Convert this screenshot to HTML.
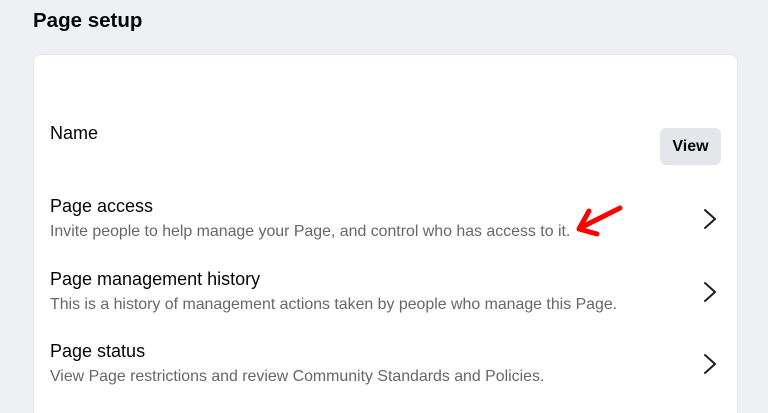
<html style="height:413px;overflow:hidden"><head><style>
body{margin:0;width:768px;height:413px;background:#eef0f3;font-family:"Liberation Sans",sans-serif;overflow:hidden;position:relative}
.t{position:absolute;left:33px;top:9px;font-size:20.5px;font-weight:bold;color:#050505}
.card{position:absolute;left:33px;top:54px;width:705px;height:359px;background:#fff;border-radius:8px 8px 0 0;border:1px solid #e4e6ea;border-bottom:none;box-sizing:border-box}
.a{position:absolute;left:50px;font-size:18px;color:#050505}
.s{position:absolute;left:50px;font-size:15.9px;color:#65676b}
.v{position:absolute;left:660px;top:128px;width:61px;height:37px;background:#e4e6eb;border-radius:6px;font-size:16px;font-weight:bold;text-align:center;line-height:37px;color:#050505}
svg{position:absolute}
</style></head><body>
<div class="t">Page setup</div>
<div class="card"></div>
<div class="a" style="top:123px">Name</div>
<div class="v">View</div>
<div class="a" style="top:196px">Page access</div>
<div class="s" style="top:223px">Invite people to help manage your Page, and control who has access to it.</div>
<div class="a" style="top:269px">Page management history</div>
<div class="s" style="top:296px">This is a history of management actions taken by people who manage this Page.</div>
<div class="a" style="top:341px">Page status</div>
<div class="s" style="top:368px">View Page restrictions and review Community Standards and Policies.</div>
<svg width="768" height="413" style="left:0;top:0">
<g fill="none" stroke="#1c1e21" stroke-width="2" stroke-linecap="round">
<path d="M705 210l10 9-10 9"/><path d="M705 283l10 9-10 9"/><path d="M705 355l10 9-10 9"/>
</g>
<g fill="none" stroke="#f00" stroke-width="5" stroke-linecap="round" stroke-linejoin="round">
<path d="M620 208L580 228"/><path d="M589 211L579 229L597 234"/>
</g>
</svg>
</body></html>
